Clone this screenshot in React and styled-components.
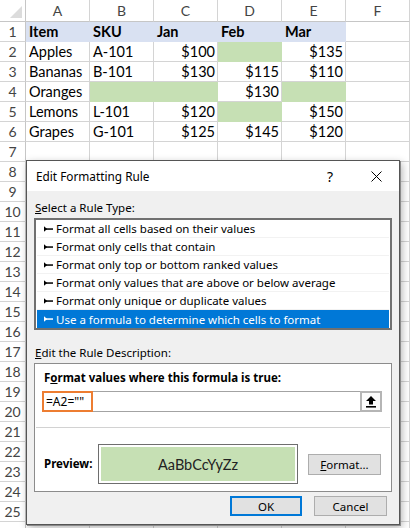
import React from "react";
import styled, { createGlobalStyle } from "styled-components";

const GlobalStyle = createGlobalStyle`
  html, body {
    margin: 0;
    padding: 0;
    background: #fff;
    overflow: hidden;
  }
  #root {
    position: relative;
    width: 410px;
    height: 528px;
    overflow: hidden;
  }
`;

const BLUE = "#d9e1f2";
const GREEN = "#c6e0b4";

const columns = ["A", "B", "C", "D", "E", "F"];

// g = green cell, text right aligned for $ values
const data = [
  ["Item", "SKU", "Jan", "Feb", "Mar"],
  ["Apples", "A-101", "$100", "g", "$135"],
  ["Bananas", "B-101", "$130", "$115", "$110"],
  ["Oranges", "g", "g", "$130", "g"],
  ["Lemons", "L-101", "$120", "g", "$150"],
  ["Grapes", "G-101", "$125", "$145", "$120"],
];

const rules = [
  "Format all cells based on their values",
  "Format only cells that contain",
  "Format only top or bottom ranked values",
  "Format only values that are above or below average",
  "Format only unique or duplicate values",
  "Use a formula to determine which cells to format",
];

const Sheet = styled.div`
  display: grid;
  grid-template-columns: 26px repeat(5, 64px) 1fr;
  grid-auto-rows: 20px;
  grid-template-rows: 22px;
  font-family: Lato, "Liberation Sans", sans-serif;
  font-size: 14.5px;
  color: #000;
`;

const Corner = styled.div`
  position: relative;
  border-right: 1px solid #c6c6c6;
  border-bottom: 1px solid #c6c6c6;

  &::after {
    content: "";
    position: absolute;
    right: 3px;
    bottom: 3px;
    width: 0;
    height: 0;
    border-left: 12px solid transparent;
    border-bottom: 12px solid #dcdcdc;
  }
`;

const ColHead = styled.div`
  display: flex;
  align-items: center;
  justify-content: center;
  color: #444;
  border-right: 1px solid #d4d4d4;
  border-bottom: 1px solid #c6c6c6;
  font-size: 14px;
`;

const RowHead = styled.div`
  display: flex;
  align-items: center;
  justify-content: center;
  color: #444;
  border-right: 1px solid #c6c6c6;
  border-bottom: 1px solid #d4d4d4;
  font-size: 14px;
`;

const Cell = styled.div`
  display: flex;
  align-items: center;
  justify-content: ${(p) => (p.$right ? "flex-end" : "flex-start")};
  padding: 0 2px 0 3px;
  background: ${(p) => p.$fill || "#fff"};
  font-weight: ${(p) => (p.$bold ? 700 : 400)};
  border-right: 1px solid ${(p) => (p.$fill ? p.$fill : "#d4d4d4")};
  border-bottom: 1px solid ${(p) => (p.$fill ? p.$fill : "#d4d4d4")};
  white-space: nowrap;
  overflow: hidden;
`;

const Dialog = styled.div`
  position: absolute;
  left: 26px;
  top: 160px;
  width: 374px;
  height: 365px;
  box-sizing: border-box;
  border: 1px solid #555;
  background: #f0f0f0;
  box-shadow: 1px 1px 0 #8a8a8a, 2px 3px 8px rgba(0, 0, 0, 0.3);
  display: flex;
  flex-direction: column;
  font-family: "Noto Sans", "DejaVu Sans", sans-serif;
  font-size: 11.5px;
  color: #000;
`;

const TitleBar = styled.div`
  height: 30px;
  flex: none;
  display: flex;
  align-items: center;
  background: #fff;
  padding-left: 9px;
  font-size: 11.8px;
`;

const Title = styled.div`
  flex: 1;
`;

const TitleButton = styled.div`
  width: 46px;
  height: 30px;
  display: flex;
  align-items: center;
  justify-content: center;
  font-size: 14px;
`;

const Body = styled.div`
  flex: 1;
  display: flex;
  flex-direction: column;
  padding: 9px 7px 0 7px;
`;

const Label = styled.div`
  line-height: 16px;
  margin-top: ${(p) => p.$mt || 0}px;
  padding-left: 1px;
`;

const ListBox = styled.div`
  margin-top: 2px;
  border: 2px solid #707070;
  background: #fff;
  padding: 0 1px;
`;

const RuleRow = styled.div`
  height: 18px;
  box-sizing: border-box;
  display: flex;
  align-items: center;
  padding-left: 7px;
  gap: 3px;
  background: ${(p) => (p.$selected ? "#0078d7" : "#fff")};
  color: ${(p) => (p.$selected ? "#fff" : "#000")};
  border-bottom: 1px solid ${(p) => (p.$selected ? "#0078d7" : "#f2f2f2")};

  &:last-child {
    border-bottom: none;
  }
`;

const DescBox = styled.div`
  margin-top: 2px;
  height: 129px;
  box-sizing: border-box;
  border: 1px solid #8c8c8c;
  background: #fff;
  padding: 6px 9px 0 7px;
  display: flex;
  flex-direction: column;
`;

const BoldLabel = styled.div`
  font-weight: 700;
  line-height: 16px;
  margin-left: 2px;
  width: ${(p) => (p.$w ? `${p.$w}px` : "auto")};
  flex: none;
`;

const FormulaInput = styled.div`
  position: relative;
  margin-top: 5px;
  height: 21px;
  box-sizing: border-box;
  border: 1px solid #a3a3a3;
  display: flex;
  align-items: center;
  justify-content: flex-end;
`;

const Highlight = styled.div`
  position: absolute;
  left: -1px;
  top: -1px;
  width: 51px;
  height: 21px;
  box-sizing: border-box;
  border: 2px solid #ed7d31;
  display: flex;
  align-items: center;
  padding-left: 2px;
  font-size: 12px;
`;

const CollapseButton = styled.div`
  width: 22px;
  height: 21px;
  margin: -1px -1px -1px 0;
  box-sizing: border-box;
  border: 2px solid #b5b5b5;
  background: #fbfbfb;
  display: flex;
  align-items: center;
  justify-content: center;
`;

const Separator = styled.div`
  height: 1px;
  background: #d2d2d2;
  margin: 15px -8px 0 -6px;
`;

const PreviewRow = styled.div`
  margin-top: 16px;
  display: flex;
  align-items: center;
`;

const PreviewBox = styled.div`
  width: 200px;
  height: 40px;
  box-sizing: border-box;
  border: 1px solid #6e6e6e;
  padding: 2px;
  background: #fff;
`;

const PreviewFill = styled.div`
  height: 100%;
  background: ${GREEN};
  display: flex;
  align-items: center;
  justify-content: center;
  font-family: Lato, "Liberation Sans", sans-serif;
  font-size: 14.5px;
  color: #222;
`;

const Button = styled.div`
  width: ${(p) => p.$w}px;
  height: ${(p) => p.$h || 20}px;
  box-sizing: border-box;
  margin-left: ${(p) => p.$ml || 0}px;
  border: ${(p) => (p.$default ? "2px solid #0078d7" : "1px solid #adadad")};
  background: #e1e1e1;
  display: flex;
  align-items: center;
  justify-content: center;
`;

const ButtonRow = styled.div`
  margin-top: 4px;
  display: flex;
  justify-content: flex-end;
  gap: 12px;
  padding-right: 5px;
`;

const RuleIcon = ({ color }) => (
  <svg width="9" height="6" viewBox="0 0 9 6">
    <polygon points="0,0.3 0,5.7 3.2,3" fill={color} />
    <rect x="1" y="2.3" width="8" height="1.5" fill={color} />
  </svg>
);

const CloseIcon = () => (
  <svg width="11" height="11" viewBox="0 0 11 11">
    <path d="M0.5 0.5 L10.5 10.5 M10.5 0.5 L0.5 10.5" stroke="#000" strokeWidth="1" />
  </svg>
);

const UpArrow = () => (
  <svg width="10" height="12" viewBox="0 0 10 12">
    <polygon points="5,0 10,5 7,5 7,8.5 3,8.5 3,5 0,5" fill="#000" />
    <rect x="0" y="10" width="10" height="1.6" fill="#000" />
  </svg>
);

const SpreadsheetBg = () => {
  const rows = [];
  for (let r = 1; r <= 26; r++) {
    const rowData = data[r - 1];
    // row 26 only peeks out below the dialog, its number stays hidden
    rows.push(<RowHead key={`h${r}`}>{r < 26 ? r : ""}</RowHead>);
    for (let c = 0; c < 6; c++) {
      const v = rowData && c < 5 ? rowData[c] : "";
      const isHead = r === 1 && c < 5;
      const fill = isHead ? BLUE : v === "g" ? GREEN : null;
      rows.push(
        <Cell
          key={`c${r}-${c}`}
          $fill={fill}
          $bold={isHead}
          $right={typeof v === "string" && v.startsWith("$")}
        >
          {v === "g" ? "" : v}
        </Cell>
      );
    }
  }

  return (
    <Sheet>
      <Corner />
      {columns.map((c) => (
        <ColHead key={c}>{c}</ColHead>
      ))}
      {rows}
    </Sheet>
  );
};

const App = () => {
  return (
    <>
      <GlobalStyle />
      <SpreadsheetBg />
      <Dialog>
        <TitleBar>
          <Title>Edit Formatting Rule</Title>
          <TitleButton>?</TitleButton>
          <TitleButton>
            <CloseIcon />
          </TitleButton>
        </TitleBar>
        <Body>
          <Label>
            <u>S</u>elect a Rule Type:
          </Label>
          <ListBox>
            {rules.map((r, i) => {
              const selected = i === rules.length - 1;
              return (
                <RuleRow key={r} $selected={selected}>
                  <RuleIcon color={selected ? "#fff" : "#000"} />
                  {r}
                </RuleRow>
              );
            })}
          </ListBox>
          <Label $mt={15}>
            <u>E</u>dit the Rule Description:
          </Label>
          <DescBox>
            <BoldLabel>
              F<u>o</u>rmat values where this formula is true:
            </BoldLabel>
            <FormulaInput>
              <Highlight>=A2=""</Highlight>
              <CollapseButton>
                <UpArrow />
              </CollapseButton>
            </FormulaInput>
            <Separator />
            <PreviewRow>
              <BoldLabel $w={54}>Preview:</BoldLabel>
              <PreviewBox>
                <PreviewFill>AaBbCcYyZz</PreviewFill>
              </PreviewBox>
              <Button $w={73} $h={21} $ml={10}>
                <span>
                  <u>F</u>ormat...
                </span>
              </Button>
            </PreviewRow>
          </DescBox>
          <ButtonRow>
            <Button $w={72} $default>
              OK
            </Button>
            <Button $w={73}>Cancel</Button>
          </ButtonRow>
        </Body>
      </Dialog>
    </>
  );
};

export default App;
